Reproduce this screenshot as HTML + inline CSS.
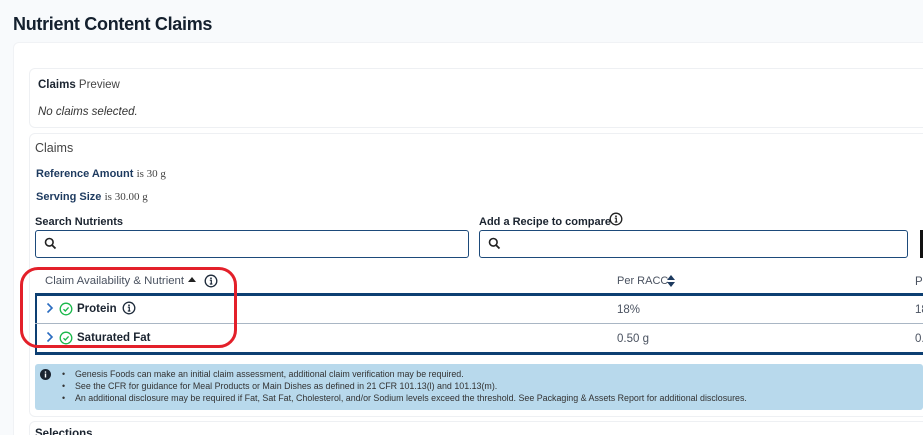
<!DOCTYPE html>
<html><head><meta charset="utf-8"><style>
*{box-sizing:border-box;margin:0;padding:0}
html,body{width:923px;height:435px;overflow:hidden}
body{background:#f8fafc;font-family:"Liberation Sans",sans-serif;color:#1b2430;position:relative}
.abs{position:absolute}
h1{position:absolute;left:13px;top:14px;font-size:18px;font-weight:bold;color:#14202e;letter-spacing:-0.3px}
.card{position:absolute;background:#fff;border:1px solid #eef0f3;border-radius:6px}
.t{position:absolute;font-size:11.5px;white-space:nowrap}
.b{font-weight:bold}
.lbl{color:#1d3a5f;font-weight:bold;font-size:11px}
.sm{color:#444;font-size:11px;font-family:"Liberation Serif",serif}
.inp{position:absolute;height:28px;border:1.5px solid #1d4a7a;border-radius:3px;background:#fff}
.line{position:absolute;left:35px;right:0;background:#0d3f72}
</style></head><body>
<h1>Nutrient Content Claims</h1>
<div class="card" style="left:13px;top:42px;width:920px;height:400px;border-color:#f0f2f5"></div>
<div class="card" style="left:29px;top:68px;width:900px;height:60px"></div>
<div class="t" style="left:38px;top:79px"><span class="b">Claims</span> <span style="color:#444">Preview</span></div>
<div class="t" style="left:38px;top:106px;font-style:italic;color:#333">No claims selected.</div>
<div class="card" style="left:29px;top:133px;width:900px;height:284px"></div>
<div class="t" style="left:35px;top:141px;font-size:12.5px;color:#444">Claims</div>
<div class="t" style="left:36px;top:168px"><span class="lbl">Reference Amount</span> <span class="sm">is 30 g</span></div>
<div class="t" style="left:36px;top:191px"><span class="lbl">Serving Size</span> <span class="sm">is 30.00 g</span></div>
<div class="t b" style="left:35px;top:216px;font-size:11px;color:#1b2430">Search Nutrients</div>
<div class="t b" style="left:479px;top:216px;font-size:11px;color:#1b2430">Add a Recipe to compare</div>
<svg class="abs" style="left:609px;top:212px" width="14" height="14" viewBox="0 0 14 14"><circle cx="7" cy="7" r="5.8" fill="none" stroke="#222" stroke-width="1.3"/><circle cx="7" cy="4.3" r=".9" fill="#222"/><path d="M5.8 6.2H7.3V10M5.8 10H8.4" fill="none" stroke="#222" stroke-width="1.2"/></svg>
<div class="inp" style="left:35px;top:230px;width:434px"></div>
<div class="inp" style="left:479px;top:230px;width:429px"></div>
<div class="abs" style="left:920px;top:230px;width:3px;height:28px;background:#111"></div>
<svg class="abs" style="left:44px;top:237px" width="13" height="13" viewBox="0 0 13 13"><circle cx="5.3" cy="5.3" r="3.8" fill="none" stroke="#222" stroke-width="1.6"/><path d="M8.2 8.2L11.5 11.5" stroke="#222" stroke-width="1.8"/></svg>
<svg class="abs" style="left:488px;top:237px" width="13" height="13" viewBox="0 0 13 13"><circle cx="5.3" cy="5.3" r="3.8" fill="none" stroke="#222" stroke-width="1.6"/><path d="M8.2 8.2L11.5 11.5" stroke="#222" stroke-width="1.8"/></svg>
<div class="t" style="left:45px;top:275px;color:#4a5260;font-size:11.4px">Claim Availability &amp; Nutrient</div>
<svg class="abs" style="left:188px;top:276px" width="8" height="6"><path d="M0 6L4 1L8 6Z" fill="#222"/></svg>
<svg class="abs" style="left:204px;top:274px" width="14" height="14" viewBox="0 0 14 14"><circle cx="7" cy="7" r="5.8" fill="none" stroke="#1d2a3a" stroke-width="1.3"/><circle cx="7" cy="4.3" r=".9" fill="#1d2a3a"/><path d="M5.8 6.2H7.3V10M5.8 10H8.4" fill="none" stroke="#1d2a3a" stroke-width="1.2"/></svg>
<div class="t" style="left:617px;top:275px;color:#4a5260;font-size:11px">Per RACC</div>
<svg class="abs" style="left:667px;top:275px" width="8" height="12"><path d="M0 5L4 0L8 5ZM0 7L4 12L8 7Z" fill="#1d3a5f"/></svg>
<div class="t" style="left:915px;top:276px;color:#4a5260">Pe</div>
<div class="line" style="top:293px;height:2.5px"></div>
<div class="abs" style="left:35px;top:295px;width:2px;height:59px;background:#0d3f72"></div>
<div class="line" style="top:323px;height:1px;background:#a9b6c4"></div>
<div class="line" style="top:352px;height:2.5px"></div>
<svg class="abs" style="left:46px;top:302px" width="8" height="12"><path d="M1.5 1.5L6 6L1.5 10.5" fill="none" stroke="#2a6cc0" stroke-width="1.6"/></svg>
<svg class="abs" style="left:59px;top:302px" width="14" height="14" viewBox="0 0 14 14"><circle cx="7" cy="7" r="5.8" fill="none" stroke="#19b84a" stroke-width="1.3"/><path d="M4.5 7.2L6.3 9L9.6 5.4" fill="none" stroke="#19b84a" stroke-width="1.3"/></svg>
<div class="t b" style="left:77px;top:303px;font-size:11.5px">Protein</div>
<svg class="abs" style="left:122px;top:301px" width="14" height="14" viewBox="0 0 14 14"><circle cx="7" cy="7" r="5.8" fill="none" stroke="#1d2a3a" stroke-width="1.3"/><circle cx="7" cy="4.3" r=".9" fill="#1d2a3a"/><path d="M5.8 6.2H7.3V10M5.8 10H8.4" fill="none" stroke="#1d2a3a" stroke-width="1.2"/></svg>
<div class="t" style="left:617px;top:304px;color:#4a5260">18%</div>
<div class="t" style="left:915px;top:304px;color:#4a5260">18</div>
<svg class="abs" style="left:46px;top:331px" width="8" height="12"><path d="M1.5 1.5L6 6L1.5 10.5" fill="none" stroke="#2a6cc0" stroke-width="1.6"/></svg>
<svg class="abs" style="left:59px;top:331px" width="14" height="14" viewBox="0 0 14 14"><circle cx="7" cy="7" r="5.8" fill="none" stroke="#19b84a" stroke-width="1.3"/><path d="M4.5 7.2L6.3 9L9.6 5.4" fill="none" stroke="#19b84a" stroke-width="1.3"/></svg>
<div class="t b" style="left:77px;top:332px;font-size:11.5px">Saturated Fat</div>
<div class="t" style="left:617px;top:333px;color:#4a5260">0.50 g</div>
<div class="t" style="left:915px;top:333px;color:#4a5260">0.</div>
<div class="abs" style="left:35px;top:364px;width:888px;height:46px;background:#b8d9ec;border-radius:3px"></div>
<svg class="abs" style="left:40px;top:369px" width="11" height="11" viewBox="0 0 11 11"><circle cx="5.5" cy="5.5" r="5.5" fill="#1b2430"/><rect x="4.8" y="4.5" width="1.4" height="4" fill="#fff"/><circle cx="5.5" cy="3" r=".8" fill="#fff"/></svg>
<div class="abs" style="left:62px;top:368px;font-size:8.9px;line-height:12px;color:#333;white-space:nowrap">
<div>•&nbsp;&nbsp;&nbsp;&nbsp;Genesis Foods can make an initial claim assessment, additional claim verification may be required.</div>
<div>•&nbsp;&nbsp;&nbsp;&nbsp;See the CFR for guidance for Meal Products or Main Dishes as defined in 21 CFR 101.13(l) and 101.13(m).</div>
<div>•&nbsp;&nbsp;&nbsp;&nbsp;An additional disclosure may be required if Fat, Sat Fat, Cholesterol, and/or Sodium levels exceed the threshold. See Packaging &amp; Assets Report for additional disclosures.</div>
</div>
<div class="card" style="left:29px;top:421px;width:900px;height:30px"></div>
<div class="t b" style="left:35px;top:428px;font-size:11.5px">Selections</div>
<div class="abs" style="left:20px;top:267px;width:217px;height:81px;border:3px solid #e3202a;border-radius:18px"></div>
</body></html>
